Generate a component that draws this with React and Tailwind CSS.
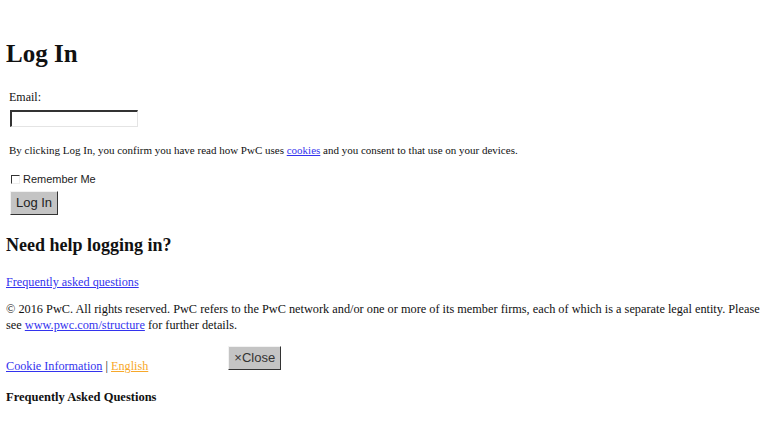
export default function App() {
  return (
    <div className="min-h-screen bg-white text-[#111] font-['Liberation_Serif','Times_New_Roman',serif]">
      <div className="pt-[38px] pl-[6px]">
        <h1 className="text-[25px] leading-[32px] font-bold">Log In</h1>

        <form className="pl-[3px] mt-[20px]" onSubmit={(e) => e.preventDefault()}>
          <label className="block text-[12px] leading-[14px]">Email:</label>
          <input
            type="text"
            className="block mt-[6px] ml-[1px] w-[128px] h-[17px] bg-white border-2 border-t-[#333] border-l-[#333] border-b-[#e4e4e4] border-r-[#e4e4e4] border-b-1 border-r-1 outline-none"
          />
          <p className="mt-[16px] text-[11px] leading-[14px]">
            By clicking Log In, you confirm you have read how PwC uses{" "}
            <a href="#" className="text-[#3333ee] underline">cookies</a> and you consent to that use on your devices.
          </p>
          <div className="mt-[15px] flex items-center gap-[3px] ml-[2px]">
            <span className="w-[9px] h-[9px] border border-t-[#333] border-l-[#333] border-b-[#eee] border-r-[#eee] bg-white"></span>
            <span className="font-['Liberation_Sans',Arial,sans-serif] text-[11px] leading-[14px] text-[#222]">Remember Me</span>
          </div>
          <button
            type="submit"
            className="mt-[5px] ml-[1px] w-[48px] h-[24px] bg-[#c4c4c4] border border-t-[#f2f2f2] border-l-[#f2f2f2] border-b-[#333] border-r-[#333] font-['Liberation_Sans',Arial,sans-serif] text-[13px] leading-[14px] text-[#222]"
          >
            Log In
          </button>
        </form>

        <h2 className="mt-[18px] text-[18px] leading-[24px] font-bold">Need help logging in?</h2>
        <p className="mt-[17px] text-[12.2px] leading-[16px]">
          <a href="#" className="text-[#3333ee] underline">Frequently asked questions</a>
        </p>
        <p className="mt-[11px] text-[12.3px] leading-[16px] pr-[16px]">
          © 2016 PwC. All rights reserved. PwC refers to the PwC network and/or one or more of its member firms, each of which is a separate legal entity. Please see{" "}
          <a href="#" className="text-[#3333ee] underline">www.pwc.com/structure</a> for further details.
        </p>

        <div className="mt-[13px] flex items-end">
          <p className="text-[12.2px] leading-[16px] pb-[2px]">
            <a href="#" className="text-[#3333ee] underline">Cookie Information</a> |{" "}
            <a href="#" className="text-[#f7a82a] underline">English</a>
          </p>
          <button className="ml-[80px] mb-[6px] w-[53px] h-[24px] bg-[#c4c4c4] border border-t-[#f2f2f2] border-l-[#f2f2f2] border-b-[#333] border-r-[#333] font-['Liberation_Sans',Arial,sans-serif] text-[13px] leading-[14px] text-[#333]">
            ×Close
          </button>
        </div>

        <h3 className="mt-[13px] text-[12.5px] leading-[16px] font-bold">Frequently Asked Questions</h3>
      </div>
    </div>
  );
}
